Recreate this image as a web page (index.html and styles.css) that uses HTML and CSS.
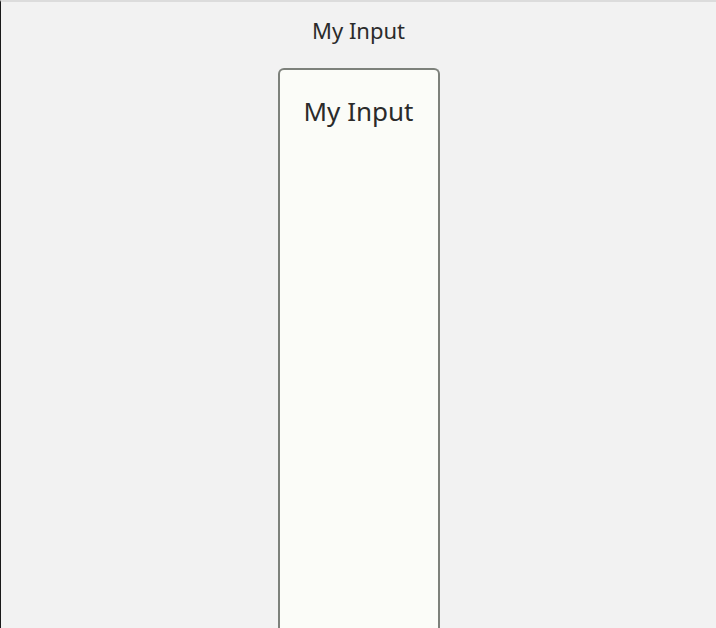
FILE: index.html
```html
<!DOCTYPE html>
<html lang="en">
<head>
    <meta charset="UTF-8">
    <title>My Input</title>
    <link rel="stylesheet" href="styles.css">
</head>
<body>

<div id="page">
    <h1 class="title">My Input</h1>
    <div class="field">
        <div class="field-label">My Input</div>
    </div>
</div>

</body>
</html>
```

FILE: styles.css
```css
html, body{
    margin: 0;
    height: 100%;
}
body{
    background: #f2f2f2;
    font-family: "Noto Sans", sans-serif;
    color: #2b2b2b;
    overflow: hidden;
}
#page{
    height: 100%;
    box-sizing: border-box;
    border-top: 2px solid #dcdcdc;
    border-left: 1px solid #1a1a1a;
    display: flex;
    flex-direction: column;
    align-items: center;
}
.title{
    margin: 13px 0 0;
    font-size: 22px;
    font-weight: 400;
    line-height: 30px;
}
.field{
    margin-top: 23px;
    width: 158px;
    flex: 1;
    background: #fbfcf8;
    border: 2px solid #7d817b;
    border-bottom: none;
    border-radius: 6px 6px 0 0;
    text-align: center;
}
.field-label{
    margin-top: 23px;
    font-size: 26px;
    line-height: 36px;
}
```
